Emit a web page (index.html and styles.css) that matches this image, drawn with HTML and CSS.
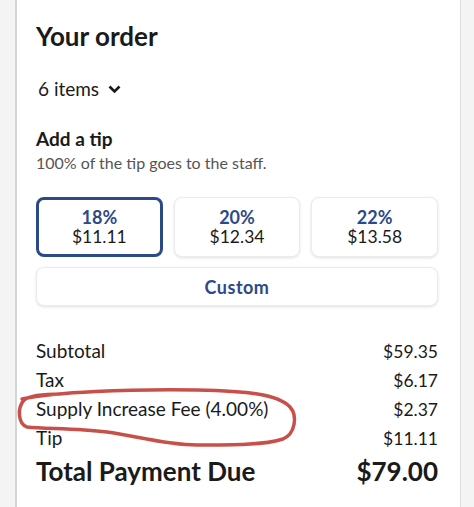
FILE: index.html
```html
<!DOCTYPE html>
<html lang="en">
<head>
    <meta charset="UTF-8">
    <meta name="viewport" content="width=device-width, initial-scale=1.0">
    <link rel="stylesheet" href="styles.css">
    <title>Your order</title>
</head>
<body>
    <div class="panel">
        <h1 class="title">Your order</h1>
        <div class="items">6 items
            <svg class="chevron" width="13" height="9" viewBox="0 0 13 9"><path d="M1.5 1.5 L6.5 6.5 L11.5 1.5" fill="none" stroke="#1a1a1a" stroke-width="2.6"/></svg>
        </div>

        <h2 class="tip-title">Add a tip</h2>
        <p class="tip-note">100% of the tip goes to the staff.</p>

        <div class="tip-options">
            <button class="tip selected"><span class="pct">18%</span><span class="amt">$11.11</span></button>
            <button class="tip"><span class="pct">20%</span><span class="amt">$12.34</span></button>
            <button class="tip"><span class="pct">22%</span><span class="amt">$13.58</span></button>
        </div>
        <button class="custom">Custom</button>

        <div class="summary">
            <div class="row"><span>Subtotal</span><span class="val">$59.35</span></div>
            <div class="row"><span>Tax</span><span class="val">$6.17</span></div>
            <div class="row fee"><span>Supply Increase Fee (4.00%)</span><span class="val">$2.37</span>
                <!-- hand drawn circle over the fee line -->
                <svg class="circle" width="290" height="66" viewBox="0 0 290 66"><path d="M6 13 C40 6 110 3 181 4 C230 5 262 8 274 21 C282 30 279 48 267 53 C250 59 215 59 181 59 C150 59 120 50 91 46 C60 42 30 43 11 41 C2 38 1 22 8 14 C15 9 30 8 44 8" fill="none" stroke="#c8504a" stroke-width="3.5" stroke-linecap="round"/></svg>
            </div>
            <div class="row"><span>Tip</span><span class="val">$11.11</span></div>
            <div class="row total"><span>Total Payment Due</span><span>$79.00</span></div>
        </div>
    </div>
</body>
</html>
```

FILE: styles.css
```css
body {
    margin: 0;
    background-color: #f4f4f4;
    font-family: Lato, "Open Sans", sans-serif;
    color: #1a1a1a;
}

.panel {
    margin: 0 13px 0 15px;
    min-height: 507px;
    box-sizing: border-box;
    background-color: #ffffff;
    border-left: 2px solid #d4d4d4;
    border-right: 1px solid #dcdcdc;
    padding: 20px 22px 0 19px;
}

.title {
    margin: 0;
    font-size: 26px;
    font-weight: 700;
    line-height: 32px;
}

.items {
    margin-top: 25px;
    font-size: 19px;
    line-height: 24px;
    display: flex;
    align-items: center;
    gap: 9px;
    padding-left: 2px;
}

.chevron {
    margin-top: 1px;
}

.tip-title {
    margin: 27px 0 0;
    font-size: 19px;
    font-weight: 700;
    line-height: 22px;
}

.tip-note {
    margin: 3px 0 0;
    font-size: 16px;
    line-height: 20px;
    color: #555555;
}

.tip-options {
    display: grid;
    grid-template-columns: 1fr 1fr 1fr;
    gap: 11px;
    margin-top: 24px;
}

.tip {
    height: 60px;
    border: 1px solid #ececec;
    border-radius: 8px;
    background-color: #ffffff;
    box-shadow: 0 1px 3px rgba(0, 0, 0, 0.12);
    display: flex;
    flex-direction: column;
    align-items: center;
    justify-content: center;
    font-family: inherit;
    padding: 0;
}

.tip.selected {
    border: 3px solid #2c4a86;
    box-shadow: none;
}

.pct {
    font-size: 18px;
    font-weight: 700;
    color: #2c4a86;
    line-height: 20px;
}

.amt {
    font-size: 17.5px;
    color: #1a1a1a;
    line-height: 20px;
}

.custom {
    display: block;
    width: 100%;
    height: 39px;
    margin-top: 10px;
    border: 1px solid #ececec;
    border-radius: 8px;
    background-color: #ffffff;
    box-shadow: 0 1px 3px rgba(0, 0, 0, 0.12);
    font-family: inherit;
    font-size: 18px;
    font-weight: 700;
    color: #2c4a86;
    letter-spacing: 0.5px;
}

.summary {
    margin-top: 31px;
}

.row {
    display: flex;
    justify-content: space-between;
    align-items: baseline;
    font-size: 19px;
    line-height: 28px;
}

.val {
    font-size: 17.5px;
}

.fee {
    position: relative;
}

.circle {
    position: absolute;
    left: -20px;
    top: -9px;
}

.total {
    margin-top: 3px;
    font-size: 26px;
    font-weight: 700;
    line-height: 30px;
}
```
